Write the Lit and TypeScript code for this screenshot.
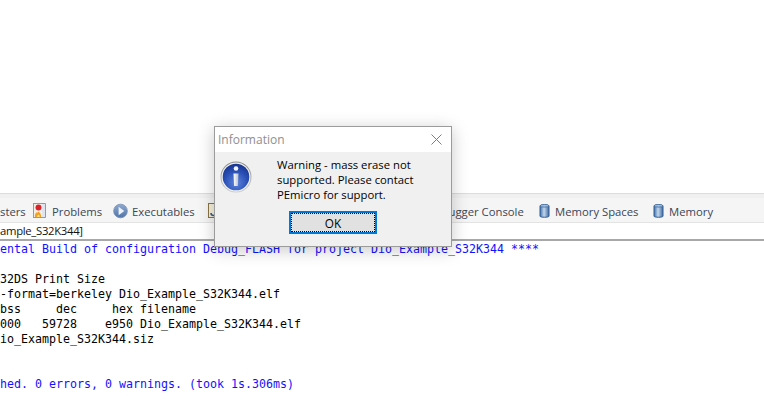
import { LitElement, html, css, svg } from "lit";
import { customElement } from "lit/decorators.js";

const problems = svg`<svg width="15" height="17" viewBox="0 0 15 17">
  <rect x="1.5" y="1.5" width="11" height="14" fill="#f4efe6" stroke="#8e99ad"/>
  <path d="M10 1.5h3.5v14H10" fill="#dfe4ee" stroke="#8e99ad"/>
  <circle cx="6.5" cy="5.5" r="3" fill="#d8232a"/>
  <path d="M3 15c-.6-3 1-4 2-5 .3 1 1 .8 1.500-.5 1.500 1 3 3 2.500 5.500z" fill="#f2a01e"/>
  <path d="M5 15c0-1.500 1-2 1.500-2.500.5.800 1.500 1.200 1.200 2.500z" fill="#fbe08a"/>
</svg>`;

const play = svg`<svg width="15" height="16" viewBox="0 0 16 16" class="round">
  <defs><linearGradient id="p" x1="0" y1="0" x2="0" y2="1"><stop offset="0" stop-color="#8fa9cf"/><stop offset="1" stop-color="#4f74a8"/></linearGradient></defs>
  <circle cx="8" cy="8" r="7.300" fill="url(#p)" stroke="#6f8bb3" stroke-width=".8"/>
  <path d="M6 3.500 12 8 6 12.500z" fill="#eef3fa"/>
</svg>`;

const junit = svg`<svg width="15" height="17" viewBox="0 0 15 17">
  <rect x="1.500" y="1.500" width="12" height="14" fill="#f6f0dc" stroke="#8a7444"/>
  <path d="M9 4v7a2.500 2.500 0 0 1-5 0" fill="none" stroke="#35608f" stroke-width="1.600"/>
</svg>`;

const memory = svg`<svg width="11" height="16" viewBox="0 0 11 16">
  <defs><linearGradient id="m" x1="0" y1="0" x2="1" y2="0"><stop offset="0" stop-color="#3f6fa8"/><stop offset=".45" stop-color="#c3d6ec"/><stop offset="1" stop-color="#3f6ba3"/></linearGradient></defs>
  <path d="M1 2.800C1 1.600 10 1.600 10 2.800V13.200C10 14.600 1 14.600 1 13.200Z" fill="url(#m)" stroke="#2f5c94"/>
  <ellipse cx="5.500" cy="2.800" rx="4.300" ry="1.300" fill="#a9c3e0" stroke="#2f5c94" stroke-width=".7"/>
</svg>`;

const tabs = [
  { w: 32, icon: null, label: "sters" },
  { w: 81, icon: problems, label: "Problems" },
  { w: 94, icon: play, label: "Executables" },
  { w: 201, icon: junit, label: "JUnit" },
  { w: 131, icon: play, label: "Debugger Console" },
  { w: 114, icon: memory, label: "Memory Spaces" },
  { w: 100, icon: memory, label: "Memory" },
];

const lines: [string, boolean][] = [
  ["ental Build of configuration Debug_FLASH for project Dio_Example_S32K344 ****", true],
  ["", false],
  ["32DS Print Size", false],
  ["-format=berkeley Dio_Example_S32K344.elf", false],
  ["bss     dec     hex filename", false],
  ["000   59728    e950 Dio_Example_S32K344.elf", false],
  ["io_Example_S32K344.siz", false],
  ["", false],
  ["", false],
  ["hed. 0 errors, 0 warnings. (took 1s.306ms)", true],
];

@customElement("app-root")
export class AppRoot extends LitElement {
  static styles = css`
    :host { display: block; width: 764px; height: 415px; position: relative; overflow: hidden; background: #fff;
      font-family: "Open Sans", "Noto Sans", sans-serif; font-size: 11.3px; }
    .spacer { height: 193px; }
    .band { height: 5px; background: #f0f0f0; border-top: 1px solid #dcdcdc; box-sizing: border-box; }
    .tabs { height: 25px; padding-top: 2px; display: flex; align-items: center; background: #f5f5f5; border-bottom: 1px solid #e3e3e3; box-sizing: border-box; color: #3c4654; }
    .tab { display: flex; align-items: center; gap: 5px; flex: none; white-space: nowrap; }
    .tab svg { display: block; flex: none; margin-top: -1px; }
    .tab svg.round { margin-right: -1px; }
    .path { height: 16px; line-height: 16px; border-bottom: 2px solid #a8a8a8; color: #111; letter-spacing: -.3px; }
    .console { margin: 0; padding-top: 1px; font-family: "DejaVu Sans Mono", monospace; font-size: 11.63px; line-height: 15px; color: #000; white-space: pre; }
    .line { height: 15px; }
    .blue { color: #1212ff; }
    .dialog { position: absolute; left: 214px; top: 126px; width: 238px; height: 121px; box-sizing: border-box; border: 1px solid #9b9b9b;
      background: #f0f0f0; box-shadow: 0 3px 16px rgba(0,0,0,.22); display: flex; flex-direction: column; }
    .title { height: 25px; flex: none; background: #fff; display: flex; align-items: center; justify-content: space-between; padding: 0 9px 0 3px; color: #8f8f8f; font-size: 12px; }
    .close { display: block; }
    .body { display: flex; padding: 5px 0 0 5px; gap: 25px; }
    .info { flex: none; margin-top: 4px; display: block; }
    .msg { color: #000; line-height: 15px; width: 160px; }
    .actions { display: flex; justify-content: center; margin-top: 9px; }
    button { width: 88px; height: 23px; box-sizing: border-box; border: 2px solid #0078d7; background: #e1e1e1; padding: 0; font: inherit; font-size: 11.8px; color: #000; display: flex; }
    .focus { flex: 1; border: 1px dotted #000; display: flex; align-items: center; justify-content: center; }
  `;

  render() {
    return html`
      <div class="spacer"></div>
      <div class="band"></div>
      <div class="tabs">
        ${tabs.map((t) => html`<div class="tab" style="width:${t.w}px">${t.icon}<span>${t.label}</span></div>`)}
      </div>
      <div class="path">ample_S32K344]</div>
      <div class="console">${lines.map(([s, b]) => html`<div class="line ${b ? "blue" : ""}">${s}</div>`)}</div>
      <div class="dialog">
        <div class="title">
          <span>Information</span>
          <svg class="close" width="11" height="11" viewBox="0 0 11 11"><path d="M.5.500l10 10M10.500.500l-10 10" stroke="#7d7d7d" stroke-width="1" fill="none"/></svg>
        </div>
        <div class="body">
          <svg class="info" width="32" height="32" viewBox="0 0 32 32">
            <defs>
              <radialGradient id="b" cx=".5" cy=".72" r=".72"><stop offset="0" stop-color="#5f86dc"/><stop offset=".6" stop-color="#2a50b6"/><stop offset="1" stop-color="#16338f"/></radialGradient>
              <linearGradient id="r" x1="0" y1="0" x2="0" y2="1"><stop offset="0" stop-color="#8a8a8a"/><stop offset="1" stop-color="#cfcfcf"/></linearGradient>
              <linearGradient id="i" x1="0" y1="0" x2="1" y2="0"><stop offset="0" stop-color="#ffffff"/><stop offset="1" stop-color="#b7c0d2"/></linearGradient>
            </defs>
            <circle cx="16" cy="16" r="15.500" fill="url(#r)"/>
            <circle cx="16" cy="16" r="14.500" fill="#fff" opacity=".85"/>
            <circle cx="16" cy="16" r="13.300" fill="url(#b)"/>
            <circle cx="16" cy="7.500" r="2.300" fill="#f4f6fb"/>
            <path d="M13.500 12.500h5l-.6 12.500h-3.800z" fill="url(#i)"/>
          </svg>
          <div class="msg">Warning - mass erase not<br>supported. Please contact<br>PEmicro for support.</div>
        </div>
        <div class="actions"><button><span class="focus">OK</span></button></div>
      </div>
    `;
  }
}
